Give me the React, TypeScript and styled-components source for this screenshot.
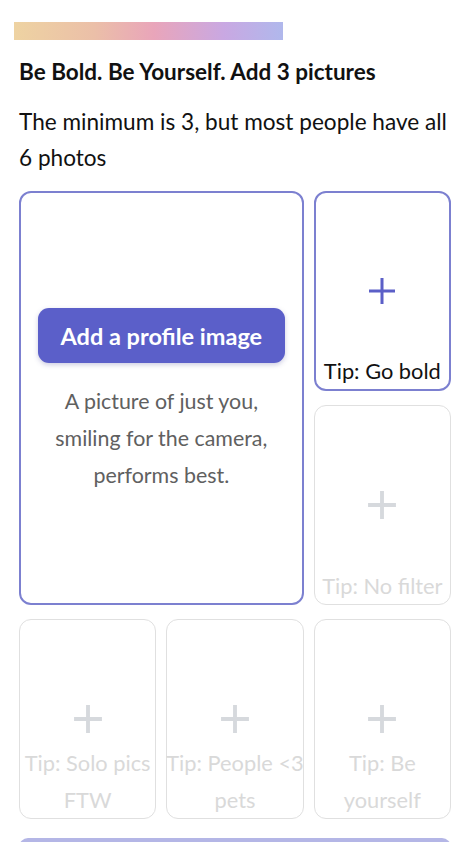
import styled, { createGlobalStyle } from 'styled-components';

const GlobalStyle = createGlobalStyle`
  html, body {
    margin: 0;
    padding: 0;
    background: #ffffff;
  }
  body {
    font-family: Lato, 'Noto Sans', sans-serif;
    color: #111111;
  }
`;

type Slot = {
  tip: string;
  active?: boolean;
};

const slots: Slot[] = [
  { tip: 'Tip: Go bold', active: true },
  { tip: 'Tip: No filter' },
  { tip: 'Tip: Solo pics FTW' },
  { tip: 'Tip: People <3 pets' },
  { tip: 'Tip: Be yourself' },
];

const PlusIcon = ({ active }: { active?: boolean }) => (
  <svg width={active ? 28 : 30} height={active ? 28 : 30} viewBox='0 0 28 28'>
    <path
      d='M14 1V27M1 14H27'
      stroke={active ? '#5b5fc7' : '#d6d9dd'}
      strokeWidth={active ? 3 : 3.6}
      strokeLinecap='butt'
    />
  </svg>
);

const App = () => {
  return (
    <Page>
      <GlobalStyle />
      <Progress />
      <Title>Be Bold. Be Yourself. Add 3 pictures</Title>
      <Subtitle>The minimum is 3, but most people have all 6 photos</Subtitle>

      <Grid>
        <MainCard>
          <AddButton type='button'>Add a profile image</AddButton>
          <Hint>A picture of just you, smiling for the camera, performs best.</Hint>
        </MainCard>
        {slots.map((slot) => (
          <SlotCard key={slot.tip} $active={!!slot.active}>
            <PlusWrap>
              <PlusIcon active={slot.active} />
            </PlusWrap>
            <Tip $active={!!slot.active}>{slot.tip}</Tip>
          </SlotCard>
        ))}
      </Grid>

      <ContinueBar />
    </Page>
  );
};

export default App;

const Page = styled.div`
  width: 474px;
  height: 842px;
  overflow: hidden;
  padding: 22px 23px 0 19px;
  box-sizing: border-box;
`;

const Progress = styled.div`
  width: 269px;
  height: 18px;
  margin-left: -5px;
  background: linear-gradient(90deg, #eed3a2 0%, #ebbfa8 30%, #e9a5ba 52%, #c9a8e2 78%, #b0b8ec 100%);
`;

const Title = styled.h1`
  margin: 18px 0 0;
  font-size: 22.5px;
  font-weight: 700;
  line-height: 28px;
  color: #111111;
`;

const Subtitle = styled.p`
  margin: 18px 0 0;
  font-size: 22.6px;
  line-height: 36px;
  color: #111111;
`;

const Grid = styled.div`
  display: grid;
  grid-template-columns: repeat(3, 1fr);
  grid-auto-rows: 200px;
  column-gap: 10px;
  row-gap: 14px;
  margin-top: 15px;
`;

const MainCard = styled.div`
  grid-column: span 2;
  grid-row: span 2;
  border: 2px solid #7c80d0;
  border-radius: 12px;
  display: flex;
  flex-direction: column;
  align-items: center;
  justify-content: center;
  padding: 0 12px;
  box-sizing: border-box;
`;

const AddButton = styled.button`
  width: 247px;
  height: 55px;
  border: none;
  border-radius: 11px;
  background: #5b5fc9;
  color: #ffffff;
  font-family: Lato, 'Noto Sans', sans-serif;
  font-size: 23.5px;
  font-weight: 700;
  box-shadow: 0 2px 5px rgba(60, 60, 140, 0.25);
  margin-top: 6px;
`;

const Hint = styled.p`
  margin: 20px 0 0;
  width: 250px;
  text-align: center;
  font-size: 21.4px;
  line-height: 37px;
  color: #606060;
`;

const SlotCard = styled.div<{ $active: boolean }>`
  position: relative;
  border: ${(p) => (p.$active ? '2px solid #7c80d0' : '1.5px solid #e0e0e0')};
  border-radius: 12px;
  display: flex;
  flex-direction: column;
  justify-content: flex-end;
  box-sizing: border-box;
`;

const PlusWrap = styled.div`
  position: absolute;
  inset: 0;
  display: flex;
  align-items: center;
  justify-content: center;
`;

const Tip = styled.div<{ $active: boolean }>`
  position: relative;
  margin: 0 -3px;
  text-align: center;
  font-size: 21.8px;
  line-height: 37px;
  color: ${(p) => (p.$active ? '#111111' : '#d9d9d9')};
`;

const ContinueBar = styled.div`
  height: 40px;
  margin-top: 19px;
  border-radius: 9px;
  background: #b4b6e6;
`;
